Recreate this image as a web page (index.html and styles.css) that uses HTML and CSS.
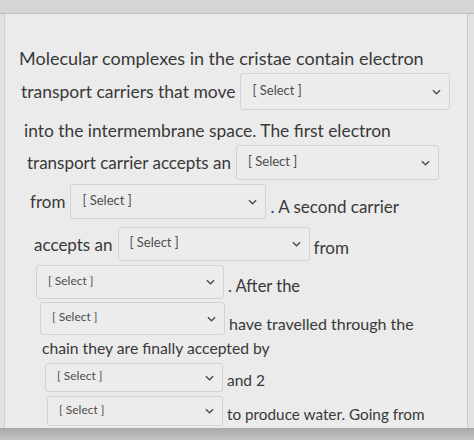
FILE: index.html
```html
<!DOCTYPE html>
<html>
<head>
<meta charset="utf-8">
<link rel="stylesheet" href="styles.css">
</head>
<body>
<div class="topbar"></div>
<div class="card">
  <div class="row r1"><span class="txt">Molecular complexes in the cristae contain electron</span></div>
  <div class="row r2"><span class="txt">transport carriers that move</span><div class="sel w2"><span>[ Select ]</span><svg class="chev" viewBox="0 0 10 6"><path d="M1 1 L5 5 L9 1"/></svg></div></div>
  <div class="row r3"><span class="txt">into the intermembrane space. The first electron</span></div>
  <div class="row r4"><span class="txt">transport carrier accepts an</span><div class="sel w4"><span>[ Select ]</span><svg class="chev" viewBox="0 0 10 6"><path d="M1 1 L5 5 L9 1"/></svg></div></div>
  <div class="row r5"><span class="txt">from</span><div class="sel w5"><span>[ Select ]</span><svg class="chev" viewBox="0 0 10 6"><path d="M1 1 L5 5 L9 1"/></svg></div><span class="txt after">. A second carrier</span></div>
  <div class="row r6"><span class="txt">accepts an</span><div class="sel w6"><span>[ Select ]</span><svg class="chev" viewBox="0 0 10 6"><path d="M1 1 L5 5 L9 1"/></svg></div><span class="txt after">from</span></div>
  <div class="row r7"><div class="sel w7"><span>[ Select ]</span><svg class="chev" viewBox="0 0 10 6"><path d="M1 1 L5 5 L9 1"/></svg></div><span class="txt after">. After the</span></div>
  <div class="row r8"><div class="sel w8"><span>[ Select ]</span><svg class="chev" viewBox="0 0 10 6"><path d="M1 1 L5 5 L9 1"/></svg></div><span class="txt after">have travelled through the</span></div>
  <div class="row r9"><span class="txt">chain they are finally accepted by</span></div>
  <div class="row r10"><div class="sel w10"><span>[ Select ]</span><svg class="chev" viewBox="0 0 10 6"><path d="M1 1 L5 5 L9 1"/></svg></div><span class="txt after">and 2</span></div>
  <div class="row r11"><div class="sel w11"><span>[ Select ]</span><svg class="chev" viewBox="0 0 10 6"><path d="M1 1 L5 5 L9 1"/></svg></div><span class="txt after">to produce water. Going from</span></div>
</div>
<div class="bottombar"></div>
</body>
</html>
```

FILE: styles.css
```css
html, body {
  margin: 0;
  padding: 0;
}
body {
  width: 474px;
  height: 440px;
  overflow: hidden;
  background: #e2e2e2;
  font-family: Lato, "Open Sans", sans-serif;
  color: #393939;
}
.topbar {
  height: 13px;
  background: #d5d5d5;
  border-bottom: 1px solid #bdbdbd;
}
.card {
  margin: 0 6px 0 4px;
  height: 414px;
  background: #ebebeb;
  border-left: 1px solid #cfcfcf;
  border-right: 1px solid #cdcdcd;
  padding-top: 31px;
  box-sizing: border-box;
}
.bottombar {
  height: 12px;
  background: linear-gradient(#a9a9a9, #c4c4c4);
}
.row {
  display: flex;
  align-items: center;
  white-space: nowrap;
}
.txt {
  line-height: 1;
}
.after {
  align-self: flex-end;
  margin-left: 4px;
}
.sel {
  box-sizing: border-box;
  display: flex;
  align-items: center;
  justify-content: space-between;
  border: 1px solid #d2d2d2;
  border-radius: 3px;
  background: #ececec;
  color: #4d4d4d;
  font-size: 13px;
  padding: 0 8px 0 11px;
  margin-left: 5px;
}
.sel span {
  margin-top: -4px;
}
.chev {
  width: 9px;
  height: 6px;
  fill: none;
  stroke: #4d4d4d;
  stroke-width: 1.6;
}
.r1 { font-size: 18px; height: 25px; padding-left: 14px; }
.r2 { font-size: 17.5px; height: 37px; margin-top: 3px; padding-left: 16px; }
.r3 { font-size: 17.4px; height: 24px; margin-top: 9px; padding-left: 19px; }
.r4 { font-size: 17px; height: 35px; margin-top: 2px; padding-left: 22px; }
.r5 { font-size: 17px; height: 35px; margin-top: 4px; padding-left: 25px; }
.r6 { font-size: 17px; height: 34px; margin-top: 8px; padding-left: 29px; }
.r7 { font-size: 16.5px; height: 34px; margin-top: 4px; padding-left: 31px; }
.r8 { font-size: 16px; height: 33px; margin-top: 3px; padding-left: 35px; }
.r9 { font-size: 15.7px; height: 22px; margin-top: 3px; padding-left: 37px; }
.r10 { font-size: 15.5px; height: 29px; margin-top: 3px; padding-left: 40px; }
.r11 { font-size: 15.3px; height: 30px; margin-top: 4px; padding-left: 42px; }
.r7 .sel, .r8 .sel, .r10 .sel, .r11 .sel { margin-left: 0; font-size: 12px; }
.r5 .after { margin-bottom: 4px; }
.r6 .after { margin-bottom: 5px; }
.r7 .after { margin-bottom: 5px; }
.r8 .after { margin-bottom: 3px; }
.r10 .after { margin-bottom: 4px; }
.r11 .after { margin-bottom: 4px; }
.w2 { width: 210px; height: 37px; }
.w4 { width: 203px; height: 35px; }
.w5 { width: 196px; height: 35px; }
.w6 { width: 192px; height: 34px; }
.w7 { width: 188px; height: 34px; }
.w8 { width: 185px; height: 33px; }
.w10 { width: 178px; height: 29px; }
.w11 { width: 176px; height: 30px; }
```
